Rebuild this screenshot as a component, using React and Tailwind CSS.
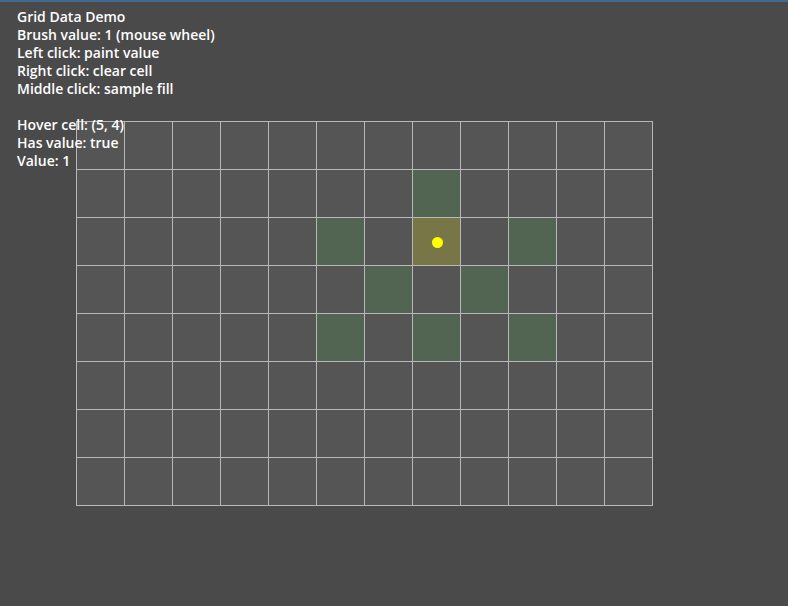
const hi = {
  "7,1": "g",
  "5,2": "g",
  "7,2": "y",
  "9,2": "g",
  "6,3": "g",
  "8,3": "g",
  "5,4": "g",
  "7,4": "g",
  "9,4": "g",
};

export default function App() {
  const cells = [];
  for (let r = 0; r < 8; r++) {
    for (let c = 0; c < 12; c++) {
      const k = hi[`${c},${r}`];
      cells.push(
        <div
          key={`${c}-${r}`}
          className={`relative h-[48px] w-[48px] border-r border-b border-[#b8b8b8] ${
            k === "g" ? "bg-[#526452]" : k === "y" ? "bg-[#787546]" : "bg-[#555555]"
          }`}
        >
          {k === "y" && (
            <div className="absolute left-[19px] top-[19px] h-[11px] w-[11px] rounded-full bg-[#ffff00]" />
          )}
        </div>
      );
    }
  }
  return (
    <div className="relative h-[606px] w-[788px] overflow-hidden bg-[#4a4a4a] border-t-2 border-[#41698f]" style={{ fontFamily: '"Open Sans", sans-serif' }}>
      <div className="pl-[76px] pt-[119px]">
        <div className="grid w-max grid-cols-12 border-l border-t border-[#b8b8b8]">{cells}</div>
      </div>
      <div className="absolute left-[17px] top-[6px] text-[14px] font-semibold leading-[18px] text-white">
        <div>Grid Data Demo</div>
        <div>Brush value: 1 (mouse wheel)</div>
        <div>Left click: paint value</div>
        <div>Right click: clear cell</div>
        <div>Middle click: sample fill</div>
        <div className="h-[18px]" />
        <div>Hover cell: (5, 4)</div>
        <div>Has value: true</div>
        <div>Value: 1</div>
      </div>
    </div>
  );
}
